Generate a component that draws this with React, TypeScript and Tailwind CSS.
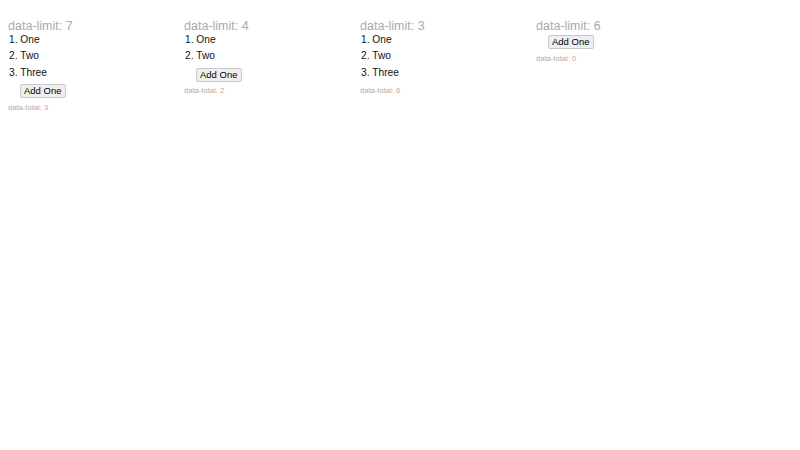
const items = ['One', 'Two', 'Three', 'Four', 'Five', 'Six', 'Seven'];

const columns = [
  { limit: 7, count: 3, total: 3 },
  { limit: 4, count: 2, total: 2 },
  { limit: 3, count: 3, total: 6 },
  { limit: 6, count: 0, total: 0 },
];

function Column({ limit, count, total }: { limit: number; count: number; total: number }) {
  return (
    <div className="w-[176px] shrink-0 pl-[8px] pt-[21px]">
      <h2 className="text-[12.5px] leading-[11px] text-[#aaaaaa] font-normal">data-limit: {limit}</h2>
      {count > 0 && (
        <ol className="list-decimal list-inside pl-[1px] text-[10.2px] leading-[16.3px] text-[#111]">
          {items.slice(0, count).map((item) => (
            <li key={item}>{item}</li>
          ))}
        </ol>
      )}
      {count < limit && (
        <div className="flex mt-[3px] mb-[4px] ml-[12px]">
          <button className="h-[14px] px-[3px] border border-[#c8c8c8] bg-[#efefef] rounded-[2px] text-[9.5px] leading-[12px] text-black">
            Add One
          </button>
        </div>
      )}
      <div className="mt-[4.7px] text-[7.6px] leading-[10px] text-[#aaaaaa]">data-total: {total}</div>
    </div>
  );
}

export default function App() {
  return (
    <div className="flex w-[800px] h-[450px] bg-white" style={{ fontFamily: '"Liberation Sans", Arial, sans-serif' }}>
      {columns.map((c, i) => (
        <Column key={i} {...c} />
      ))}
    </div>
  );
}
